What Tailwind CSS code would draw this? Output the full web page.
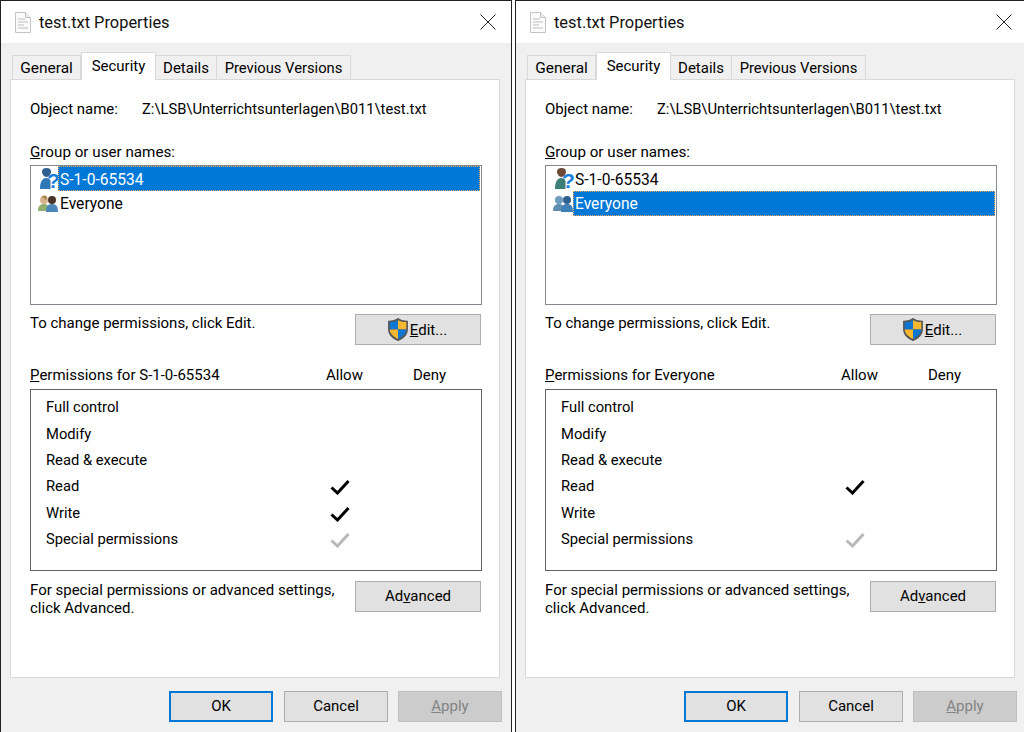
<!DOCTYPE html>
<html lang="en">
<head>
<meta charset="UTF-8">
<title>test.txt Properties</title>
<script src="https://cdn.jsdelivr.net/npm/@tailwindcss/browser@4"></script>
</head>
<body class="bg-white">
<div class="flex w-[1024px] h-[732px] overflow-hidden font-['Roboto',sans-serif] text-[15px] leading-[20px] text-black">

  <!-- Left dialog -->
  <div class="w-[512px] h-[732px] shrink-0 border-l border-t border-r border-l-[#222] border-t-[#222] border-r-[#222] bg-[#f0f0f0] flex flex-col">
    <div class="h-[42px] bg-white flex items-center pl-[14px] pr-[15px] shrink-0">
      <svg width="16" height="21" viewBox="0 0 16 21" class="shrink-0"><path d="M.5.5h10l5 5v15H.5z" fill="#fbfbfb" stroke="#c4c4c4"/><path d="M10.500.5v5h5" fill="#eee" stroke="#c4c4c4"/><path d="M3 7h7M3 10h10M3 13h6M3 16h10" stroke="#bdbdbd"/></svg>
      <span class="ml-[8px] pt-[2px] text-[16.4px] text-[#111]">test.txt Properties</span>
      <svg width="16" height="16" viewBox="0 0 16 16" class="ml-auto"><path d="M.5.5l15 15M15.500.5l-15 15" stroke="#222" fill="none"/></svg>
    </div>
    <div class="flex items-end h-[36px] pl-[11px] shrink-0 relative z-10">
      <div class="w-[69px] h-[24px] pt-[1px] text-[15.5px] border border-[#d9d9d9] border-b-0 flex items-center justify-center">General</div>
      <div class="w-[75px] h-[28px] pb-[1px] bg-white border border-[#d9d9d9] border-b-0 flex items-center justify-center -mb-px">Security</div>
      <div class="w-[61px] h-[24px] pt-[1px] border border-[#d9d9d9] border-b-0 border-l-0 flex items-center justify-center">Details</div>
      <div class="w-[134px] h-[24px] pt-[1px] text-[14.75px] border border-[#d9d9d9] border-b-0 border-l-0 flex items-center justify-center">Previous Versions</div>
    </div>
    <div class="ml-[9px] w-[490px] h-[599px] bg-white border border-[#d9d9d9] pl-[19px] pt-[19px] shrink-0">
      <div class="flex h-[20px] items-center"><span class="w-[112px]">Object name:</span><span class="text-[14.75px]">Z:\LSB\Unterrichtsunterlagen\B011\test.txt</span></div>
      <div class="mt-[23px] h-[20px] flex items-center"><span class="text-[15.2px]"><span class="underline">G</span>roup or user names:</span></div>
      <div class="mt-[3px] w-[452px] h-[140px] border border-[#828790] pl-[8px] pr-px text-[15.6px]">
        <div class="flex h-[25px] items-center">
          <svg width="19" height="24" viewBox="0 0 19 24" class="shrink-0 overflow-visible"><path d="M3 4.500C3 2 5 1 7.500 1S12 2 12 4.500 10 10 7.500 10 3 7 3 4.500z" fill="#2f5f8f"/><path d="M1 22c0-7 2-11 6.500-11 2 0 3.500 1 4 3v8z" fill="#2f78b8"/><text x="8" y="21" font-size="21" font-weight="700" fill="#1680dc" font-family="Liberation Sans">?</text></svg>
          <div class="flex-1 h-[25px] bg-[#0078d7] text-white border border-dotted border-[#e8a860] flex items-center pl-[1px] pt-[2px]">S-1-0-65534</div>
        </div>
        <div class="flex h-[25px] items-center">
          <svg width="19" height="24" viewBox="0 0 19 24" class="shrink-0 -ml-[1px] overflow-visible"><circle cx="6" cy="8" r="4" fill="#d8b48c"/><path d="M4 5c1-2 4-2 5 0l-1 3z" fill="#a8834e"/><path d="M0 19c0-5 2-7 6-7s5 2 5 7z" fill="#8fb070"/><circle cx="14" cy="8" r="4" fill="#4a3428"/><path d="M8 20c0-6 2-8 6-8s6 2 6 8z" fill="#4a86b8"/></svg>
          <div class="flex-1 pl-[3px]">Everyone</div>
        </div>
      </div>
      <div class="flex mt-[9px] h-[31px] w-[451px] justify-between">
        <span class="mt-[-1px]">To change permissions, click Edit.</span>
        <button class="w-[126px] h-[31px] pr-[3px] bg-[#e1e1e1] border border-[#adadad] flex items-center justify-center">
          <svg width="24" height="25" viewBox="0 0 22 24"><path d="M11 1.500c3 2 6 2.500 9 2.500v8c0 5-4 8.500-9 10.500C6 20.500 2 17 2 12V4c3 0 6-.5 9-2.500z" fill="#555" stroke="#555"/><path d="M11 3v9H3V4.800c3 0 5.500-.5 8-1.800z" fill="#0f76d2"/><path d="M11 3c2.500 1.300 5 1.800 8 1.800V12h-8z" fill="#f5b82e"/><path d="M3 12h8v9c-4-1.800-7.500-4.500-8-9z" fill="#f5b82e"/><path d="M19 12h-8v9c4-1.800 7.500-4.500 8-9z" fill="#0f76d2"/></svg>
          <span><span class="underline">E</span>dit...</span>
        </button>
      </div>
      <div class="flex h-[20px] mt-[20px] items-center w-[451px]">
        <span class="w-[296px]"><span class="underline">P</span>ermissions for S-1-0-65534</span>
        <span class="w-[87px]">Allow</span><span>Deny</span>
      </div>
      <div class="mt-[4px] w-[452px] h-[182px] border border-[#646464] pt-[4px] pl-[15px] text-[14.75px]">
        <div class="h-[26.4px] flex items-center">Full control</div>
        <div class="h-[26.4px] flex items-center">Modify</div>
        <div class="h-[26.4px] flex items-center">Read &amp; execute</div>
        <div class="h-[26.4px] flex items-center"><span class="w-[284px]">Read</span><svg width="20" height="16" viewBox="0 0 20 16" class="mt-[2px]"><path d="M1.500 8.500l6 5.500L18.500 2" fill="none" stroke="#000" stroke-width="3"/></svg></div>
        <div class="h-[26.4px] flex items-center"><span class="w-[284px]">Write</span><svg width="20" height="16" viewBox="0 0 20 16" class="mt-[2px]"><path d="M1.500 8.500l6 5.500L18.500 2" fill="none" stroke="#000" stroke-width="3"/></svg></div>
        <div class="h-[26.4px] flex items-center"><span class="w-[284px]">Special permissions</span><svg width="20" height="16" viewBox="0 0 20 16" class="mt-[2px]"><path d="M1.500 8.500l6 5.500L18.500 2" fill="none" stroke="#b8b8b8" stroke-width="3"/></svg></div>
      </div>
      <div class="flex mt-[10px] w-[451px] justify-between">
        <span class="leading-[18px]">For special permissions or advanced settings,<br>click Advanced.</span>
        <button class="w-[126px] h-[31px] pb-px bg-[#e1e1e1] border border-[#adadad] shrink-0">Ad<span class="underline">v</span>anced</button>
      </div>
    </div>
    <div class="flex pl-[168px] mt-[13px] gap-[11px]">
      <button class="w-[104px] h-[31px] pb-px bg-[#e1e1e1] border-2 border-[#0078d7]">OK</button>
      <button class="w-[104px] h-[31px] pb-px bg-[#e1e1e1] border border-[#adadad]">Cancel</button>
      <button class="w-[104px] h-[31px] pb-px -ml-px bg-[#cccccc] border border-[#bfbfbf] text-[#838383]"><span class="underline">A</span>pply</button>
    </div>
  </div>

  <div class="w-[3px] shrink-0 bg-white"></div>

  <!-- Right dialog -->
  <div class="w-[509px] h-[732px] shrink-0 border-l border-t border-l-[#222] border-t-[#222] bg-[#f0f0f0] flex flex-col">
    <div class="h-[42px] bg-white flex items-center pl-[14px] pr-[12px] shrink-0">
      <svg width="16" height="21" viewBox="0 0 16 21" class="shrink-0"><path d="M.5.5h10l5 5v15H.5z" fill="#fbfbfb" stroke="#c4c4c4"/><path d="M10.500.5v5h5" fill="#eee" stroke="#c4c4c4"/><path d="M3 7h7M3 10h10M3 13h6M3 16h10" stroke="#bdbdbd"/></svg>
      <span class="ml-[8px] pt-[2px] text-[16.4px] text-[#111]">test.txt Properties</span>
      <svg width="16" height="16" viewBox="0 0 16 16" class="ml-auto"><path d="M.5.5l15 15M15.500.5l-15 15" stroke="#222" fill="none"/></svg>
    </div>
    <div class="flex items-end h-[36px] pl-[11px] shrink-0 relative z-10">
      <div class="w-[69px] h-[24px] pt-[1px] text-[15.5px] border border-[#d9d9d9] border-b-0 flex items-center justify-center">General</div>
      <div class="w-[75px] h-[28px] pb-[1px] bg-white border border-[#d9d9d9] border-b-0 flex items-center justify-center -mb-px">Security</div>
      <div class="w-[61px] h-[24px] pt-[1px] border border-[#d9d9d9] border-b-0 border-l-0 flex items-center justify-center">Details</div>
      <div class="w-[134px] h-[24px] pt-[1px] text-[14.75px] border border-[#d9d9d9] border-b-0 border-l-0 flex items-center justify-center">Previous Versions</div>
    </div>
    <div class="ml-[9px] w-[490px] h-[599px] bg-white border border-[#d9d9d9] pl-[19px] pt-[19px] shrink-0">
      <div class="flex h-[20px] items-center"><span class="w-[112px]">Object name:</span><span class="text-[14.75px]">Z:\LSB\Unterrichtsunterlagen\B011\test.txt</span></div>
      <div class="mt-[23px] h-[20px] flex items-center"><span class="text-[15.2px]"><span class="underline">G</span>roup or user names:</span></div>
      <div class="mt-[3px] w-[452px] h-[140px] border border-[#828790] pl-[8px] pr-px text-[15.6px]">
        <div class="flex h-[25px] items-center">
          <svg width="19" height="24" viewBox="0 0 19 24" class="shrink-0 overflow-visible"><path d="M3 4.500C3 2 5 1 7.500 1S12 2 12 4.500 10 10 7.500 10 3 7 3 4.500z" fill="#6b4a36"/><path d="M1 22c0-7 2-11 6.500-11 2 0 3.500 1 4 3v8z" fill="#3c7f78"/><text x="8" y="21" font-size="21" font-weight="700" fill="#1680dc" font-family="Liberation Sans">?</text></svg>
          <div class="flex-1 pl-[2px] pt-[2px]">S-1-0-65534</div>
        </div>
        <div class="flex h-[25px] items-center">
          <svg width="19" height="24" viewBox="0 0 19 24" class="shrink-0 -ml-[1px] overflow-visible"><circle cx="6" cy="8" r="4" fill="#6f9cbc"/><path d="M0 19c0-5 2-7 6-7s5 2 5 7z" fill="#5f8fb0"/><circle cx="14" cy="8" r="4" fill="#2f5f8f"/><path d="M8 20c0-6 2-8 6-8s6 2 6 8z" fill="#3f7fb8"/></svg>
          <div class="flex-1 ml-px h-[25px] bg-[#0078d7] text-white border border-dotted border-[#e8a860] flex items-center pl-[1px]">Everyone</div>
        </div>
      </div>
      <div class="flex mt-[9px] h-[31px] w-[451px] justify-between">
        <span class="mt-[-1px]">To change permissions, click Edit.</span>
        <button class="w-[126px] h-[31px] pr-[3px] bg-[#e1e1e1] border border-[#adadad] flex items-center justify-center">
          <svg width="24" height="25" viewBox="0 0 22 24"><path d="M11 1.500c3 2 6 2.500 9 2.500v8c0 5-4 8.500-9 10.500C6 20.500 2 17 2 12V4c3 0 6-.5 9-2.500z" fill="#555" stroke="#555"/><path d="M11 3v9H3V4.800c3 0 5.500-.5 8-1.800z" fill="#0f76d2"/><path d="M11 3c2.500 1.300 5 1.800 8 1.800V12h-8z" fill="#f5b82e"/><path d="M3 12h8v9c-4-1.800-7.500-4.500-8-9z" fill="#f5b82e"/><path d="M19 12h-8v9c4-1.800 7.500-4.500 8-9z" fill="#0f76d2"/></svg>
          <span><span class="underline">E</span>dit...</span>
        </button>
      </div>
      <div class="flex h-[20px] mt-[20px] items-center w-[451px]">
        <span class="w-[296px]"><span class="underline">P</span>ermissions for Everyone</span>
        <span class="w-[87px]">Allow</span><span>Deny</span>
      </div>
      <div class="mt-[4px] w-[452px] h-[182px] border border-[#646464] pt-[4px] pl-[15px] text-[14.75px]">
        <div class="h-[26.4px] flex items-center">Full control</div>
        <div class="h-[26.4px] flex items-center">Modify</div>
        <div class="h-[26.4px] flex items-center">Read &amp; execute</div>
        <div class="h-[26.4px] flex items-center"><span class="w-[284px]">Read</span><svg width="20" height="16" viewBox="0 0 20 16" class="mt-[2px]"><path d="M1.500 8.500l6 5.500L18.500 2" fill="none" stroke="#000" stroke-width="3"/></svg></div>
        <div class="h-[26.4px] flex items-center">Write</div>
        <div class="h-[26.4px] flex items-center"><span class="w-[284px]">Special permissions</span><svg width="20" height="16" viewBox="0 0 20 16" class="mt-[2px]"><path d="M1.500 8.500l6 5.500L18.500 2" fill="none" stroke="#b8b8b8" stroke-width="3"/></svg></div>
      </div>
      <div class="flex mt-[10px] w-[451px] justify-between">
        <span class="leading-[18px]">For special permissions or advanced settings,<br>click Advanced.</span>
        <button class="w-[126px] h-[31px] pb-px bg-[#e1e1e1] border border-[#adadad] shrink-0">Ad<span class="underline">v</span>anced</button>
      </div>
    </div>
    <div class="flex pl-[168px] mt-[13px] gap-[11px]">
      <button class="w-[104px] h-[31px] pb-px bg-[#e1e1e1] border-2 border-[#0078d7]">OK</button>
      <button class="w-[104px] h-[31px] pb-px bg-[#e1e1e1] border border-[#adadad]">Cancel</button>
      <button class="w-[104px] h-[31px] pb-px -ml-px bg-[#cccccc] border border-[#bfbfbf] text-[#838383]"><span class="underline">A</span>pply</button>
    </div>
  </div>
</div>
</body>
</html>
